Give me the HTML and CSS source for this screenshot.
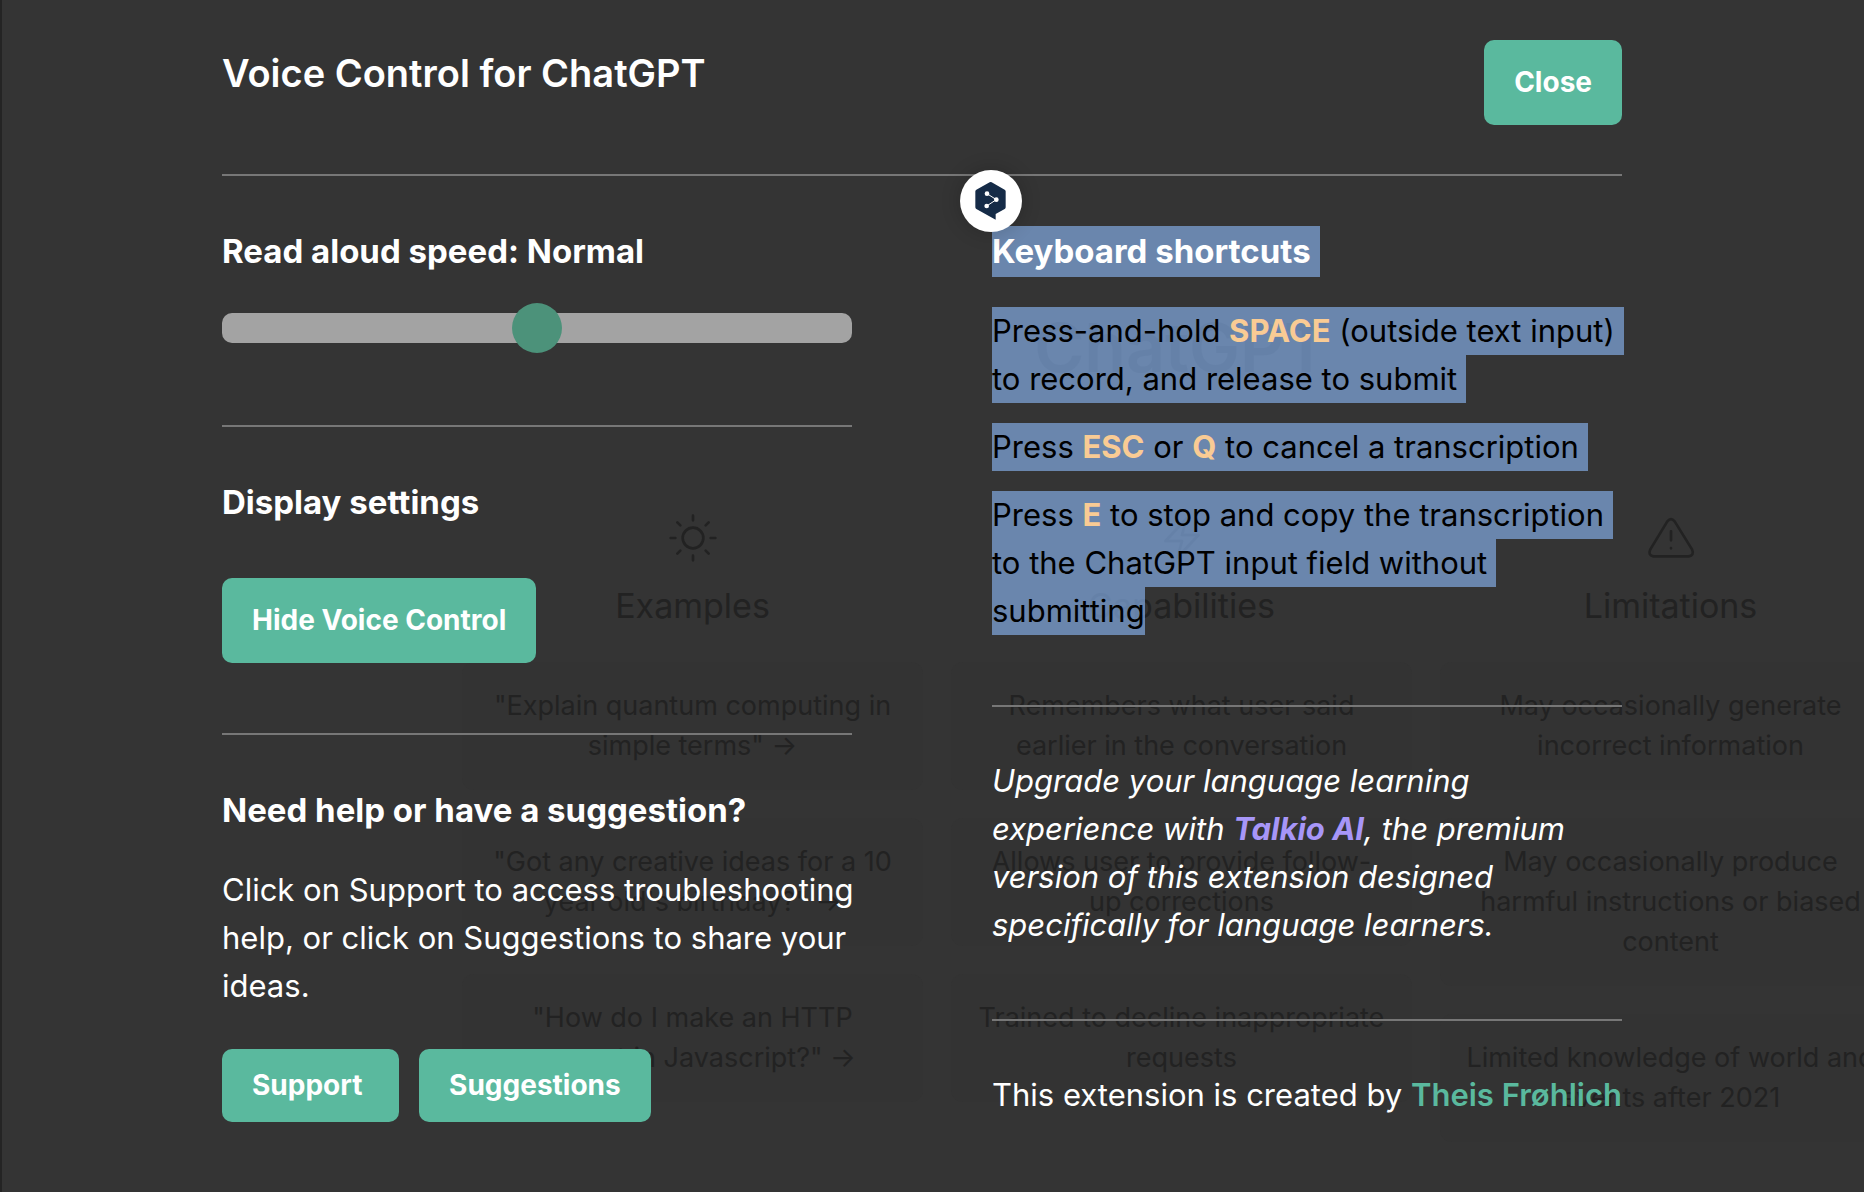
FILE: index.html
```html
<!DOCTYPE html>
<html lang="en">
<head>
    <meta charset="UTF-8">
    <meta name="viewport" content="width=device-width, initial-scale=1.0">
    <title>Voice Control for ChatGPT</title>
    <link rel="stylesheet" href="styles.css">
</head>
<body>
    <!-- Chat start page, dimmed behind the settings -->
    <div class="chat">
        <h1 class="chat-title">ChatGPT</h1>
        <div class="chat-columns">
            <div class="chat-column">
                <svg class="chat-icon" viewBox="87 72 144 144">
                    <circle cx="159" cy="144" r="31"/>
                    <path d="M159 77v14M159 197v14M92 144h14M212 144h14M112 97l9 9M206 97l-9 9M112 191l9-9M206 191l-9-9"/>
                </svg>
                <h2>Examples</h2>
                <div class="card">"Explain quantum computing in<br>simple terms" →</div>
                <div class="card">"Got any creative ideas for a 10<br>year old's birthday?" →</div>
                <div class="card">"How do I make an HTTP<br>request in Javascript?" →</div>
            </div>
            <div class="chat-column">
                <svg class="chat-icon" viewBox="0 0 144 144">
                    <path d="M22.5 81l63-67.5L72 63h49.5l-63 67.5L72 81z"/>
                </svg>
                <h2>Capabilities</h2>
                <div class="card">Remembers what user said<br>earlier in the conversation</div>
                <div class="card">Allows user to provide follow-<br>up corrections</div>
                <div class="card">Trained to decline inappropriate<br>requests</div>
            </div>
            <div class="chat-column">
                <svg class="chat-icon" viewBox="80 72 144 144">
                    <path d="M141 94Q152 81 163 94L215 178Q223 196 205 199H99Q82 196 90 178ZM152 124v27M152 174v1"/>
                </svg>
                <h2>Limitations</h2>
                <div class="card">May occasionally generate<br>incorrect information</div>
                <div class="card">May occasionally produce<br>harmful instructions or biased<br>content</div>
                <div class="card">Limited knowledge of world and<br>events after 2021</div>
            </div>
        </div>
    </div>

    <div class="panel">
        <header class="header">
            <h2 class="title">Voice Control for ChatGPT</h2>
            <button class="btn" type="button">Close</button>
        </header>

        <div class="columns">
            <div class="column">
                <section>
                    <h3><label for="speed">Read aloud speed: Normal</label></h3>
                    <input class="slider" type="range" id="speed" min="0" max="10" value="5">
                </section>
                <section>
                    <h3>Display settings</h3>
                    <button class="btn btn-display" type="button">Hide Voice Control</button>
                </section>
                <section>
                    <h3>Need help or have a suggestion?</h3>
                    <p>Click on Support to access troubleshooting<br>help, or click on Suggestions to share your<br>ideas.</p>
                    <div class="links">
                        <a class="btn btn-small" href="#support">Support&nbsp;</a>
                        <a class="btn btn-small" href="#suggestions">Suggestions</a>
                    </div>
                </section>
            </div>

            <div class="column">
                <section class="shortcuts">
                    <button class="translate" type="button" aria-label="Translate selection">
                        <svg viewBox="60 60 186 186">
                            <path fill="#152b47" d="M149 97Q152 95 155 97L194 119Q197 121 197 124V172Q197 175 194 177L167 192V209L109 177Q106 175 106 172V124Q106 121 109 119Z"/>
                            <path fill="none" stroke="#fff" stroke-width="3" d="M141 131L169 149L140 168"/>
                            <g fill="#fff"><circle cx="141" cy="131" r="7"/><circle cx="169" cy="149" r="7"/><circle cx="140" cy="168" r="7"/></g>
                        </svg>
                    </button>
                    <h3><span class="selected">Keyboard shortcuts</span></h3>
                    <p>
                        <span class="selected">Press-and-hold <b>SPACE</b> (outside text input)</span>
                        <span class="selected">to record, and release to submit</span>
                    </p>
                    <p>
                        <span class="selected">Press <b>ESC</b> or <b>Q</b> to cancel a transcription</span>
                    </p>
                    <p>
                        <span class="selected">Press <b>E</b> to stop and copy the transcription</span>
                        <span class="selected">to the ChatGPT input field without</span>
                        <span class="selected selected-end">submitting</span>
                    </p>
                </section>
                <section>
                    <p class="promo">Upgrade your language learning<br>experience with <a class="talkio" href="#talkio">Talkio AI</a>, the premium<br>version of this extension designed<br>specifically for language learners.</p>
                </section>
                <section>
                    <p>This extension is created by <a class="author" href="#author">Theis Frøhlich</a></p>
                </section>
            </div>
        </div>
    </div>
</body>
</html>
```
FILE: styles.css
```css
* {
    box-sizing: border-box;
}
body {
    position: relative;
    margin: 0;
    min-height: 100vh;
    overflow: hidden;
    background-color: #343434;
    color: white;
    font-family: Inter, "Liberation Sans", sans-serif;
}
h1, h2, h3, p {
    margin: 0;
}

/* page behind */
.chat {
    min-height: 100vh;
    padding: 307px 0 48px 460px;
    border-left: 2px solid #242424;
    color: #222;
}
.chat-title {
    width: 1439px;
    margin-bottom: 127px;
    font-size: 68px;
    font-weight: 600;
    line-height: 80px;
    text-align: center;
}
.chat-columns {
    display: grid;
    grid-template-columns: repeat(3, 461px);
    gap: 28px;
}
.chat-column {
    display: flex;
    flex-direction: column;
    gap: 28px;
    text-align: center;
}
.chat-icon {
    width: 48px;
    height: 48px;
    margin: 0 auto -12px;
    fill: none;
    stroke: #222;
    stroke-width: 8;
    stroke-linecap: round;
    stroke-linejoin: round;
}
.chat h2 {
    font-size: 34px;
    font-weight: 400;
    line-height: 56px;
}
.card {
    padding: 24px 0;
    border-radius: 12px;
    background-color: #333;
    font-size: 27px;
    line-height: 40px;
}

/* settings */
.panel {
    position: absolute;
    inset: 0;
    padding: 40px 242px 40px 222px;
}
.header {
    display: flex;
    justify-content: space-between;
    align-items: flex-start;
    padding-bottom: 49px;
    border-bottom: 2px solid #777;
}
.title {
    font-size: 38px;
    font-weight: 600;
    line-height: 66px;
}
.columns {
    display: grid;
    grid-template-columns: repeat(2, minmax(0, 1fr));
    gap: 140px;
}
section {
    padding: 50px 0 70px;
}
section + section {
    border-top: 2px solid #777;
}
h3 {
    margin-bottom: 30px;
    font-size: 33px;
    font-weight: 700;
    line-height: 51px;
}
p {
    font-size: 31px;
    line-height: 48px;
    white-space: nowrap;
}
p + p {
    margin-top: 20px;
}
a {
    text-decoration: none;
}
.btn {
    display: block;
    padding: 20px 30px;
    border: none;
    border-radius: 10px;
    background-color: #5ab99e;
    color: white;
    font-family: inherit;
    font-size: 28px;
    font-weight: 700;
    line-height: 45px;
}
.btn-display {
    margin-top: 50px;
}
.btn-small {
    padding: 14px 30px;
}
.links {
    display: flex;
    gap: 20px;
    margin-top: 39px;
}
.slider {
    display: block;
    appearance: none;
    width: 100%;
    height: 30px;
    margin: 36px 0 12px;
    border-radius: 10px;
    background-color: #a3a3a3;
}
.slider::-webkit-slider-thumb {
    appearance: none;
    width: 50px;
    height: 50px;
    border-radius: 50%;
    background-color: #4c927a;
}
.shortcuts {
    position: relative;
}
.selected {
    display: block;
    width: max-content;
    padding-right: 9px;
    background-color: rgba(124, 161, 213, 0.75);
}
p .selected {
    color: black;
}
.selected-end {
    padding-right: 0;
}
.selected b {
    color: #f9cb94;
    font-weight: 700;
}
.translate {
    position: absolute;
    top: -6px;
    left: -32px;
    width: 62px;
    height: 62px;
    padding: 0;
    border: none;
    border-radius: 50%;
    background-color: white;
    box-shadow: 0 0 20px rgba(0, 0, 0, 0.2);
}
.translate svg {
    display: block;
}
.promo {
    font-style: italic;
}
.talkio {
    color: #a796f8;
    font-weight: 700;
}
.author {
    color: #5ab99e;
    font-weight: 600;
}
```
